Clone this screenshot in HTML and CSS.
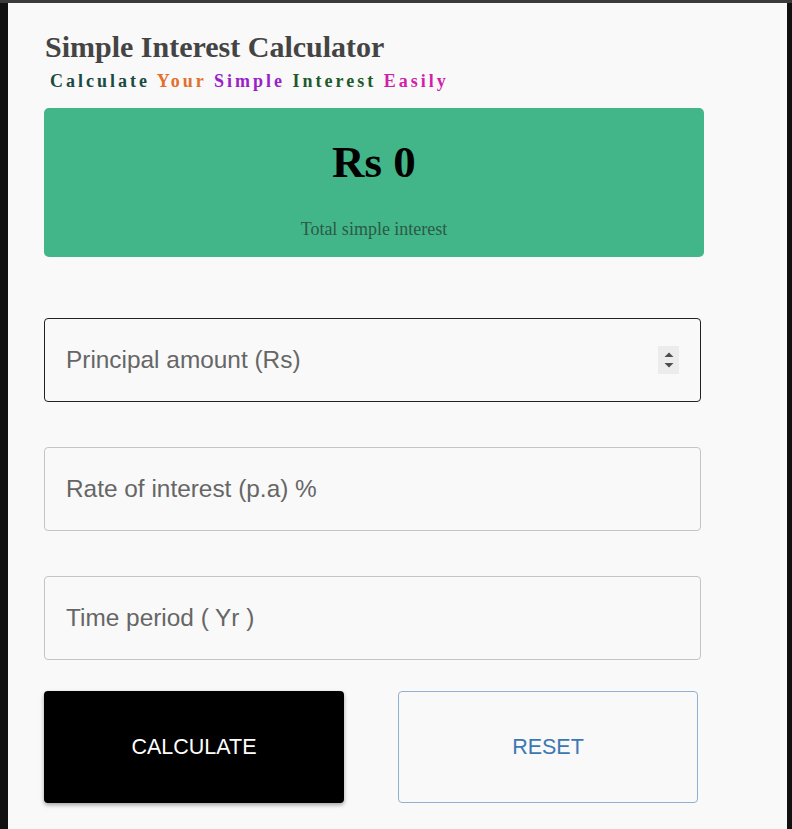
FILE: index.html
```html
<!DOCTYPE html>
<html>
<head>
<meta charset="utf-8">
<link rel="stylesheet" href="styles.css">
</head>
<body>
<div class="topbar"></div>
<div class="frame">
  <main class="page">
    <h1 class="title">Simple Interest Calculator</h1>
    <p class="tagline"><span class="c1">Calculate</span> <span class="c2">Your</span> <span class="c3">Simple</span> <span class="c4">Interest</span> <span class="c5">Easily</span></p>
    <section class="result">
      <div class="amount">Rs 0</div>
      <div class="label">Total simple interest</div>
    </section>
    <form class="form">
      <div class="field focused">
        <input class="input" type="text" placeholder="Principal amount (Rs)">
        <span class="spin"><svg width="12" height="22" viewBox="0 0 12 22"><path d="M1.5 8 L6 3.5 L10.5 8 Z" fill="#4d4d4d"/><path d="M1.5 14 L6 18.5 L10.5 14 Z" fill="#4d4d4d"/></svg></span>
      </div>
      <div class="field">
        <input class="input" type="text" placeholder="Rate of interest (p.a) %">
      </div>
      <div class="field">
        <input class="input" type="text" placeholder="Time period ( Yr )">
      </div>
      <div class="buttons">
        <button type="button" class="btn calc">CALCULATE</button>
        <button type="button" class="btn reset">RESET</button>
      </div>
    </form>
  </main>
  <div class="rightbar"></div>
</div>
</body>
</html>
```
FILE: styles.css
```css
html, body {
  margin: 0;
  padding: 0;
  background: #111111;
  height: 100%;
}
.topbar {
  height: 3px;
  background: #3b3b3d;
}
.frame {
  display: flex;
  height: calc(100% - 3px);
  padding-left: 8px;
}
.page {
  flex: 0 0 779px;
  background: #f9f9f9;
  padding: 0 0 0 36px;
  box-sizing: border-box;
  overflow: hidden;
}
.rightbar {
  flex: 1;
  background: #111111;
}
.title {
  font-family: "Liberation Serif", "Times New Roman", serif;
  font-weight: bold;
  font-size: 30px;
  line-height: 34px;
  color: #444444;
  margin: 27px 0 0 1px;
}
.tagline {
  font-family: "Liberation Serif", "Times New Roman", serif;
  font-weight: bold;
  font-size: 18px;
  line-height: 22px;
  letter-spacing: 3px;
  margin: 6px 0 0 6px;
}
.c1 { color: #1b4b40; }
.c2 { color: #e3702a; }
.c3 { color: #9a1ec9; }
.c4 { color: #1c5a2a; }
.c5 { color: #d11faa; }
.result {
  width: 660px;
  height: 149px;
  margin-top: 16px;
  background: #42b688;
  border-radius: 5px;
  display: flex;
  flex-direction: column;
  align-items: center;
  font-family: "Liberation Serif", "Times New Roman", serif;
}
.amount {
  font-size: 45px;
  font-weight: bold;
  color: #000;
  line-height: 52px;
  margin-top: 28px;
}
.label {
  font-size: 18px;
  color: #2b5a47;
  margin-top: 31px;
}
.form {
  display: flex;
  flex-direction: column;
  margin-top: 61px;
}
.field {
  position: relative;
  width: 657px;
  height: 84px;
  box-sizing: border-box;
  border: 1px solid #c4c4c4;
  border-radius: 4px;
  margin-bottom: 45px;
}
.field.focused {
  border-color: #222222;
}
.input {
  width: 100%;
  height: 100%;
  box-sizing: border-box;
  border: none;
  background: transparent;
  padding: 0 0 0 21px;
  font-family: "Liberation Sans", Arial, sans-serif;
  font-size: 24.4px;
  color: #333;
  outline: none;
}
.input::placeholder {
  color: #666666;
}
.spin {
  position: absolute;
  right: 21px;
  top: 27px;
  width: 21px;
  height: 28px;
  background: #ececec;
  display: flex;
  align-items: center;
  justify-content: center;
}
.buttons {
  display: flex;
  gap: 54px;
  margin-top: -14px;
}
.btn {
  width: 300px;
  height: 112px;
  border-radius: 4px;
  font-family: "Liberation Sans", Arial, sans-serif;
  font-size: 21.5px;
  cursor: pointer;
}
.calc {
  background: #000;
  color: #fff;
  border: none;
  box-shadow: 0 2px 4px rgba(0,0,0,0.35);
}
.reset {
  background: transparent;
  color: #3b78b3;
  border: 1px solid #8fb2d2;
}
```
